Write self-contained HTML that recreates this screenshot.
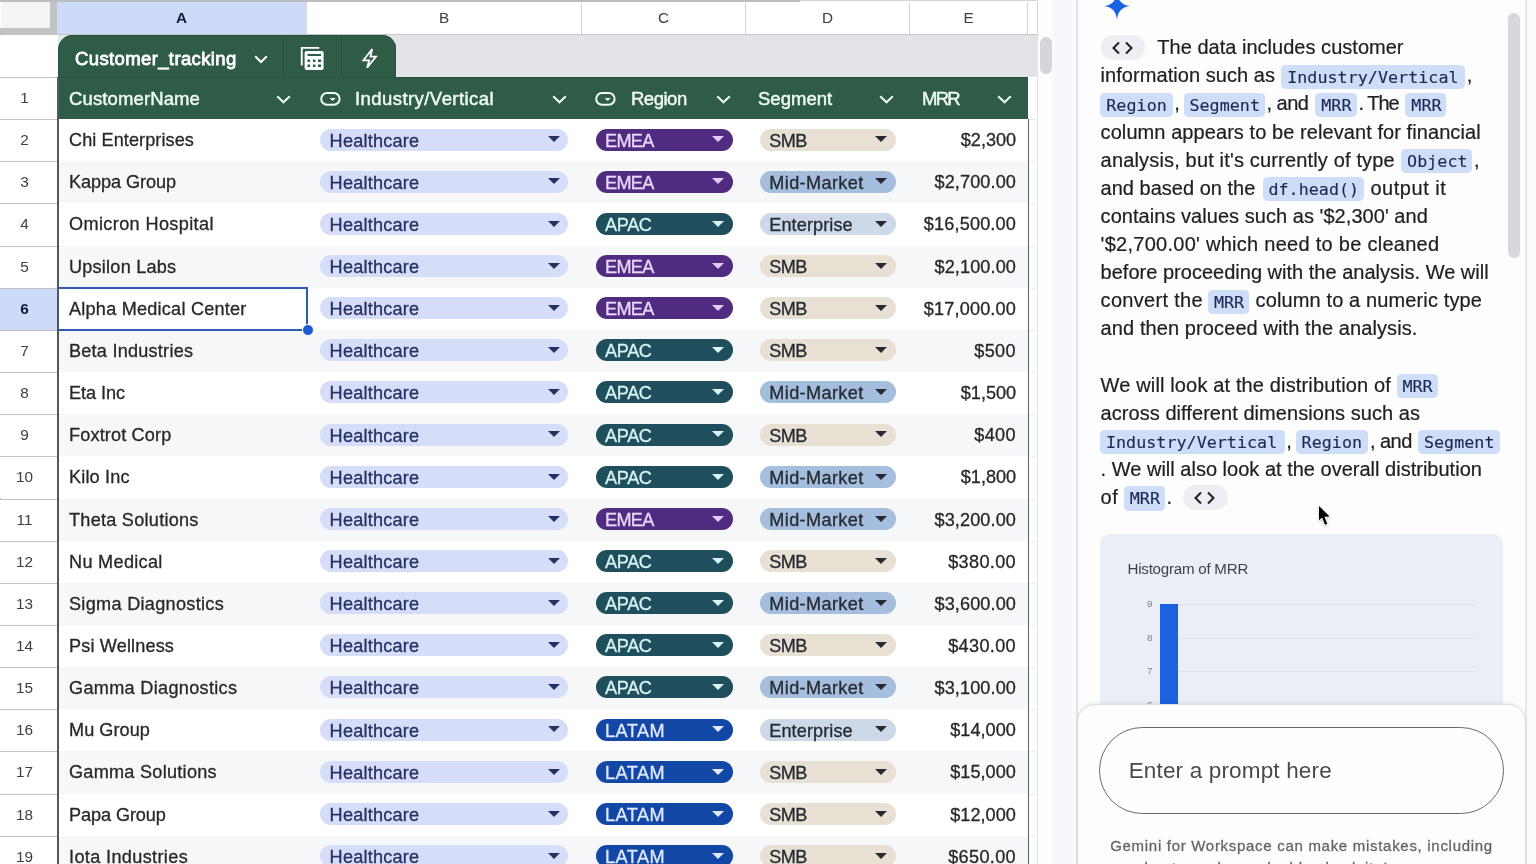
<!DOCTYPE html>
<html lang="en"><head><meta charset="utf-8"><title>Customer tracking</title>
<style>
*{box-sizing:border-box;margin:0;padding:0}
html,body{width:1536px;height:864px;overflow:hidden;background:#fff}
body{position:relative;font-family:"Liberation Sans",sans-serif;color:#1f1f1f}
#sheet{position:absolute;left:0;top:0;width:1054px;height:864px;background:#fff;overflow:hidden}
/* column headers */
#topline{position:absolute;left:0;top:0;width:800px;height:2px;background:#bcbdbf}
#topline2{position:absolute;left:800px;top:0;width:254px;height:1px;background:#d4d5d7}
#leftedge{position:absolute;left:0;top:29px;width:1px;height:840px;background:#b9bbbe}
.fl{position:absolute;left:1029px;width:9px;height:1px;background:#eceef0}
.ch{position:absolute;top:2px;height:32px;background:#fff;border-right:1px solid #d5d6d8;font-size:15.3px;color:#3c4043;text-align:center;line-height:31px}
.ch.sel{background:#ccdbf7;color:#0b1d3f;font-weight:bold}
#chline{position:absolute;left:57px;top:34px;width:997px;height:1px;background:#c4c6c8}
#corner{position:absolute;left:0;top:0;width:57px;height:35px;background:#f3f4f6;box-shadow:inset 0 0 0 1.5px #fcfcfc}
#corner i{position:absolute;display:block;background:#c2c3c5}
/* band row */
#band{position:absolute;left:58px;top:35px;width:980px;height:42px;background:#e2e4e7}
#tab{position:absolute;left:58px;top:35px;width:338px;height:43px;background:#2f5c46;border-radius:15px 14px 0 0;color:#fff;box-shadow:inset 0 0 0 1px #2a523f}
#tab .t{position:absolute;left:17px;top:0;line-height:47.9px;font-size:18.5px;color:#fff;-webkit-text-stroke:0.8px #fff}
#tab .dv{position:absolute;top:2px;width:1px;height:40px;background:#28503d}
/* row header column */
.rh{position:absolute;left:0;width:57px;height:42.15px;border-top:1px solid #bfc1c3;font-size:15.3px;color:#3c4043;text-align:center;line-height:40px;padding-right:8px;background:#fff}
.rh.sel{background:#ccdbf7;color:#0b1d3f;font-weight:bold}
/* green header row */
#hdr{position:absolute;left:58px;top:77px;width:970px;height:42.2px;background:#2f5c46;box-shadow:inset 0 1px 0 #2b5441;color:#f0fff6;font-size:18.5px}
#hdr .h{position:absolute;top:0;line-height:43.1px;white-space:nowrap;color:#eefcf4;-webkit-text-stroke:0.45px #eefcf4}
#hdr svg{position:absolute}
/* data rows */
.row{position:absolute;left:58px;width:970px;height:42.15px;font-size:18.1px;-webkit-text-stroke:0.3px;color:#26282b;white-space:nowrap}
.row.even{background:#fff}
.row.odd{background:#f5f7f9}
.nm{position:absolute;left:11px;top:0;line-height:43.6px}
.mrr{position:absolute;right:12px;top:0;line-height:43.6px;text-align:right}
.chip{position:absolute;top:9.4px;height:22px;border-radius:11px;line-height:22px}
.chip .ct{position:absolute;left:9.3px;top:0;line-height:24.6px}
.tri{position:absolute;top:7.8px;width:0;height:0;border-left:6px solid transparent;border-right:6px solid transparent;border-top:6.5px solid #333}
.ind{left:262.3px;width:248px;background:#d5ddf8;color:#273063}
.ind .tri{right:8.8px;border-top-color:#273063}
.reg{left:537.8px;width:137.5px;color:#e6dcff}
.reg .tri{right:9.2px;border-top-color:#e6dcff}
.emea{background:#502c80;color:#e9d7ff}.emea .tri{border-top-color:#e2c9ff}
.apac{background:#1f4f5c;color:#d9f4f6}.apac .tri{border-top-color:#d9f4f6}
.latam{background:#1347a6;color:#dfe9ff}.latam .tri{border-top-color:#dfe9ff}
.seg{left:702px;width:136px;color:#262b33}
.seg .tri{right:9px;border-top-color:#262b33}
.smb{background:#e7e0d3}
.midmarket{background:#a5bedd}
.enterprise{background:#cdd8e9}
#selbox{position:absolute;left:57px;top:287px;width:251px;height:44px;border:2.5px solid #2d5bb4;pointer-events:none}
#selhandle{position:absolute;left:302px;top:324.2px;width:12px;height:12px;border-radius:50%;background:#1d5bd0;border:1px solid #fff}
#tblleft{position:absolute;left:57px;top:77px;width:2px;height:800px;background:#4d5a57}
#tblright{position:absolute;left:1027.5px;top:119px;width:1.5px;height:800px;background:#5a5f63}
/* stub column F and scrollbar */
#colF{position:absolute;left:1029px;top:119px;width:9px;height:760px;background:#fff}
#vscroll{position:absolute;left:1038px;top:0;width:16px;height:864px;background:linear-gradient(90deg,#fefefe 0,#fefefe 11px,#f8fafc 16px)}
#colFline{position:absolute;left:1037px;top:77px;width:2px;height:800px;background:#dedfe1}
#vthumb{position:absolute;left:1040px;top:37px;width:12px;height:37px;border-radius:6px;background:#d4d6d9}
/* gap */
#gap{position:absolute;left:1054px;top:0;width:22px;height:864px;background:linear-gradient(90deg,#f6f8fc 0,#f6f8fc 18px,#fcfcfd 21px)}
/* panel */
#panel{position:absolute;left:1076px;top:-20px;width:451px;height:900px;background:#fdfdfe;border-left:2px solid #e3e4e7;border-right:2px solid #e7e8eb;overflow:hidden}
#rightedge{position:absolute;left:1527px;top:0;width:9px;height:864px;background:#fbfbfd}
#msg{position:absolute;left:0;top:0;width:1536px;height:520px;font-size:20px;color:#1f1f1f;white-space:nowrap}
#msg .ln{position:absolute;left:0;width:1536px;height:28.11px;line-height:28.11px}
#msg .tx{position:absolute;top:0;line-height:28.11px;letter-spacing:0.04px;-webkit-text-stroke:0.22px #1f1f1f}
code{position:absolute;top:3.4px;height:24.3px;line-height:24.8px;font-family:"DejaVu Sans Mono","Liberation Mono",monospace;font-size:16.7px;background:#cedef9;color:#1b2a55;-webkit-text-stroke:0.15px #1b2a55;border-radius:4.5px;padding-left:5.9px;white-space:nowrap;overflow:hidden}
.cb{position:absolute;top:2px;height:24.8px;border-radius:12.4px;background:#eceef4}
.cb svg{position:absolute;left:50%;margin-left:-11.9px;top:4.6px}
#pscroll{position:absolute;left:1508px;top:13px;width:11.5px;height:245px;border-radius:6px;background:#d6d8dc}
#chart{position:absolute;left:1100px;top:534px;width:403px;height:200px;border-radius:11px;background:#ebeef6}
#chart .ttl{position:absolute;left:27.5px;top:24.5px;font-size:15.1px;color:#3f4347;line-height:20px;white-space:nowrap}
#chart .gl{position:absolute;left:60px;width:315px;height:1px;background:#dcdfe6}
#chart .yl{position:absolute;left:36.5px;width:16px;text-align:right;font-size:9.8px;color:#7d8187;line-height:12px}
#chart .bar{position:absolute;left:59.8px;top:70.3px;width:18px;height:140px;background:#1b62e0}
#inputcard{position:absolute;left:1076.5px;top:704.3px;width:449.5px;height:200px;background:#fdfdfe;border:1.3px solid #dddee2;border-radius:18px 18px 0 0;box-shadow:0 -1px 3px rgba(60,64,67,.10)}
#prompt{position:absolute;left:1098.7px;top:727px;width:405px;height:86.5px;border:1.6px solid #686b6f;border-radius:43.25px;background:#fefefe}
#prompt span{position:absolute;left:29px;top:0;line-height:86px;font-size:22.5px;color:#474a4d;white-space:nowrap}
#foot{position:absolute;left:1110.2px;top:834.7px;width:400px;font-size:15px;line-height:22.5px;color:#62666b;-webkit-text-stroke:0.3px #62666b;white-space:nowrap}
#cursor{position:absolute;left:1316px;top:503px;filter:drop-shadow(0 1px 1px rgba(0,0,0,.25))}

/* render text with greyscale antialiasing */
#sheet,#msg,#chart,#prompt,#foot{opacity:.999}

</style></head>
<body>
<div id="sheet">
<div id="corner"><i style="left:50px;top:0;width:7px;height:35px"></i><i style="left:0;top:28px;width:57px;height:7px"></i></div>
<div class="ch sel" style="left:57px;width:250px">A</div>
<div class="ch" style="left:307px;width:275px">B</div>
<div class="ch" style="left:582px;width:164px">C</div>
<div class="ch" style="left:746px;width:164px">D</div>
<div class="ch" style="left:910px;width:118px">E</div>
<div class="ch" style="left:1028px;width:10px"></div>
<div id="topline"></div><div id="topline2"></div><div id="leftedge"></div>
<div id="chline"></div>
<div class="rh" style="top:35px;border-top:none;height:42px"></div>
<div id="band"></div>
<div id="tab"><span class="t" style="letter-spacing:0.377px">Customer_tracking</span>
<svg style="position:absolute;left:195.5px;top:19.7px" width="14" height="9" viewBox="0 0 14 9"><path d="M1.2 1.2 L7 7 L12.8 1.2" fill="none" stroke="#fff" stroke-width="2"/></svg>
<i class="dv" style="left:225px"></i><i class="dv" style="left:283px"></i>
<svg style="position:absolute;left:241px;top:10px" width="27" height="27" viewBox="0 0 27 27"><path d="M2.75 20.6 V2.9 H20.300" fill="none" stroke="#fff" stroke-width="1.9"/><rect x="5.6" y="5.9" width="19" height="19" rx="1.800" fill="#fff"/><path d="M8.500 9.100 h13.600 v1.800 h-13.600 Z M8.500 14.500 h2.500 v2.500 h-2.500 Z M13.900 14.500 h2.500 v2.500 h-2.500 Z M18.900 14.500 h3.200 v2.500 h-3.200 Z M8.500 19.500 h2.500 v2.500 h-2.500 Z M13.900 19.500 h2.500 v2.500 h-2.500 Z M18.900 19.500 h3.200 v2.500 h-3.200 Z" fill="#2f5c46"/></svg>
<svg style="position:absolute;left:301px;top:10px" width="22" height="27" viewBox="0 0 22 27"><path d="M13.2 4 L4.4 15.300 H10.200 L8.100 22.800 L17 11.600 H11.400 Z" fill="none" stroke="#fff" stroke-width="1.800" stroke-linejoin="miter"/></svg>
</div>
<div class="rh" style="top:77px">1</div>
<div id="hdr">
<span class="h" style="left:11px;letter-spacing:0.123px">CustomerName</span>
<svg style="left:218px;top:18px" width="15" height="9" viewBox="0 0 15 9"><path d="M1.2 1.2 L7.500 7.300 L13.800 1.200" fill="none" stroke="#effdf5" stroke-width="2"/></svg>
<svg style="left:261px;top:13.500px" width="23" height="16" viewBox="0 0 23 16"><rect x="2.2" y="2.1" width="18.4" height="11.6" rx="5.8" fill="none" stroke="#effdf5" stroke-width="2"/><path d="M10.6 7.1 H16.700 L13.650 10 Z" fill="#effdf5"/></svg>
<span class="h" style="left:297px;letter-spacing:0.436px">Industry/Vertical</span>
<svg style="left:494px;top:18px" width="15" height="9" viewBox="0 0 15 9"><path d="M1.2 1.2 L7.500 7.300 L13.800 1.200" fill="none" stroke="#effdf5" stroke-width="2"/></svg>
<svg style="left:536px;top:13.500px" width="23" height="16" viewBox="0 0 23 16"><rect x="2.2" y="2.1" width="18.4" height="11.6" rx="5.8" fill="none" stroke="#effdf5" stroke-width="2"/><path d="M10.6 7.1 H16.700 L13.650 10 Z" fill="#effdf5"/></svg>
<span class="h" style="left:573px;letter-spacing:-0.488px">Region</span>
<svg style="left:658px;top:18px" width="15" height="9" viewBox="0 0 15 9"><path d="M1.2 1.2 L7.500 7.300 L13.800 1.200" fill="none" stroke="#effdf5" stroke-width="2"/></svg>
<span class="h" style="left:700px;letter-spacing:0.026px">Segment</span>
<svg style="left:821px;top:18px" width="15" height="9" viewBox="0 0 15 9"><path d="M1.2 1.2 L7.500 7.300 L13.800 1.200" fill="none" stroke="#effdf5" stroke-width="2"/></svg>
<span class="h" style="left:864px;letter-spacing:-1.770px">MRR</span>
<svg style="left:939px;top:18px" width="15" height="9" viewBox="0 0 15 9"><path d="M1.2 1.2 L7.500 7.300 L13.800 1.200" fill="none" stroke="#effdf5" stroke-width="2"/></svg>
</div>
<div id="colF"></div>
<div id="colFline"></div><div id="vscroll"></div><div id="vthumb"></div>
<div class="rh" style="top:119.15px">2</div>
<div class="row even" style="top:119.15px"><span class="nm" style="letter-spacing:0.085px">Chi Enterprises</span><span class="chip ind"><span class="ct" style="letter-spacing:0.232px">Healthcare</span><i class="tri"></i></span><span class="chip reg emea"><span class="ct" style="letter-spacing:-0.694px">EMEA</span><i class="tri"></i></span><span class="chip seg smb"><span class="ct" style="letter-spacing:-0.609px">SMB</span><i class="tri"></i></span><span class="mrr" style="letter-spacing:-0.029px">$2,300</span></div>
<div class="rh" style="top:161.30px">3</div>
<div class="row odd" style="top:161.30px"><span class="nm" style="letter-spacing:-0.054px">Kappa Group</span><span class="chip ind"><span class="ct" style="letter-spacing:0.232px">Healthcare</span><i class="tri"></i></span><span class="chip reg emea"><span class="ct" style="letter-spacing:-0.694px">EMEA</span><i class="tri"></i></span><span class="chip seg midmarket"><span class="ct" style="letter-spacing:0.380px">Mid-Market</span><i class="tri"></i></span><span class="mrr" style="letter-spacing:0.113px">$2,700.00</span></div>
<div class="rh" style="top:203.45px">4</div>
<div class="row even" style="top:203.45px"><span class="nm" style="letter-spacing:0.382px">Omicron Hospital</span><span class="chip ind"><span class="ct" style="letter-spacing:0.232px">Healthcare</span><i class="tri"></i></span><span class="chip reg apac"><span class="ct" style="letter-spacing:-0.379px">APAC</span><i class="tri"></i></span><span class="chip seg enterprise"><span class="ct" style="letter-spacing:0.092px">Enterprise</span><i class="tri"></i></span><span class="mrr" style="letter-spacing:0.160px">$16,500.00</span></div>
<div class="rh" style="top:245.60px">5</div>
<div class="row odd" style="top:245.60px"><span class="nm" style="letter-spacing:0.226px">Upsilon Labs</span><span class="chip ind"><span class="ct" style="letter-spacing:0.232px">Healthcare</span><i class="tri"></i></span><span class="chip reg emea"><span class="ct" style="letter-spacing:-0.694px">EMEA</span><i class="tri"></i></span><span class="chip seg smb"><span class="ct" style="letter-spacing:-0.609px">SMB</span><i class="tri"></i></span><span class="mrr" style="letter-spacing:0.113px">$2,100.00</span></div>
<div class="rh sel" style="top:287.75px">6</div>
<div class="row even" style="top:287.75px"><span class="nm" style="letter-spacing:0.232px">Alpha Medical Center</span><span class="chip ind"><span class="ct" style="letter-spacing:0.232px">Healthcare</span><i class="tri"></i></span><span class="chip reg emea"><span class="ct" style="letter-spacing:-0.694px">EMEA</span><i class="tri"></i></span><span class="chip seg smb"><span class="ct" style="letter-spacing:-0.609px">SMB</span><i class="tri"></i></span><span class="mrr" style="letter-spacing:0.160px">$17,000.00</span></div>
<div class="rh" style="top:329.90px">7</div>
<div class="row odd" style="top:329.90px"><span class="nm" style="letter-spacing:0.235px">Beta Industries</span><span class="chip ind"><span class="ct" style="letter-spacing:0.232px">Healthcare</span><i class="tri"></i></span><span class="chip reg apac"><span class="ct" style="letter-spacing:-0.379px">APAC</span><i class="tri"></i></span><span class="chip seg smb"><span class="ct" style="letter-spacing:-0.609px">SMB</span><i class="tri"></i></span><span class="mrr" style="letter-spacing:0.378px">$500</span></div>
<div class="rh" style="top:372.05px">8</div>
<div class="row even" style="top:372.05px"><span class="nm" style="letter-spacing:-0.055px">Eta Inc</span><span class="chip ind"><span class="ct" style="letter-spacing:0.232px">Healthcare</span><i class="tri"></i></span><span class="chip reg apac"><span class="ct" style="letter-spacing:-0.379px">APAC</span><i class="tri"></i></span><span class="chip seg midmarket"><span class="ct" style="letter-spacing:0.380px">Mid-Market</span><i class="tri"></i></span><span class="mrr" style="letter-spacing:-0.029px">$1,500</span></div>
<div class="rh" style="top:414.20px">9</div>
<div class="row odd" style="top:414.20px"><span class="nm" style="letter-spacing:0.158px">Foxtrot Corp</span><span class="chip ind"><span class="ct" style="letter-spacing:0.232px">Healthcare</span><i class="tri"></i></span><span class="chip reg apac"><span class="ct" style="letter-spacing:-0.379px">APAC</span><i class="tri"></i></span><span class="chip seg smb"><span class="ct" style="letter-spacing:-0.609px">SMB</span><i class="tri"></i></span><span class="mrr" style="letter-spacing:0.378px">$400</span></div>
<div class="rh" style="top:456.35px">10</div>
<div class="row even" style="top:456.35px"><span class="nm" style="letter-spacing:0.165px">Kilo Inc</span><span class="chip ind"><span class="ct" style="letter-spacing:0.232px">Healthcare</span><i class="tri"></i></span><span class="chip reg apac"><span class="ct" style="letter-spacing:-0.379px">APAC</span><i class="tri"></i></span><span class="chip seg midmarket"><span class="ct" style="letter-spacing:0.380px">Mid-Market</span><i class="tri"></i></span><span class="mrr" style="letter-spacing:-0.029px">$1,800</span></div>
<div class="rh" style="top:498.50px">11</div>
<div class="row odd" style="top:498.50px"><span class="nm" style="letter-spacing:0.262px">Theta Solutions</span><span class="chip ind"><span class="ct" style="letter-spacing:0.232px">Healthcare</span><i class="tri"></i></span><span class="chip reg emea"><span class="ct" style="letter-spacing:-0.694px">EMEA</span><i class="tri"></i></span><span class="chip seg midmarket"><span class="ct" style="letter-spacing:0.380px">Mid-Market</span><i class="tri"></i></span><span class="mrr" style="letter-spacing:0.113px">$3,200.00</span></div>
<div class="rh" style="top:540.65px">12</div>
<div class="row even" style="top:540.65px"><span class="nm" style="letter-spacing:0.320px">Nu Medical</span><span class="chip ind"><span class="ct" style="letter-spacing:0.232px">Healthcare</span><i class="tri"></i></span><span class="chip reg apac"><span class="ct" style="letter-spacing:-0.379px">APAC</span><i class="tri"></i></span><span class="chip seg smb"><span class="ct" style="letter-spacing:-0.609px">SMB</span><i class="tri"></i></span><span class="mrr" style="letter-spacing:0.349px">$380.00</span></div>
<div class="rh" style="top:582.80px">13</div>
<div class="row odd" style="top:582.80px"><span class="nm" style="letter-spacing:0.304px">Sigma Diagnostics</span><span class="chip ind"><span class="ct" style="letter-spacing:0.232px">Healthcare</span><i class="tri"></i></span><span class="chip reg apac"><span class="ct" style="letter-spacing:-0.379px">APAC</span><i class="tri"></i></span><span class="chip seg midmarket"><span class="ct" style="letter-spacing:0.380px">Mid-Market</span><i class="tri"></i></span><span class="mrr" style="letter-spacing:0.113px">$3,600.00</span></div>
<div class="rh" style="top:624.95px">14</div>
<div class="row even" style="top:624.95px"><span class="nm" style="letter-spacing:0.150px">Psi Wellness</span><span class="chip ind"><span class="ct" style="letter-spacing:0.232px">Healthcare</span><i class="tri"></i></span><span class="chip reg apac"><span class="ct" style="letter-spacing:-0.379px">APAC</span><i class="tri"></i></span><span class="chip seg smb"><span class="ct" style="letter-spacing:-0.609px">SMB</span><i class="tri"></i></span><span class="mrr" style="letter-spacing:0.349px">$430.00</span></div>
<div class="rh" style="top:667.10px">15</div>
<div class="row odd" style="top:667.10px"><span class="nm" style="letter-spacing:0.318px">Gamma Diagnostics</span><span class="chip ind"><span class="ct" style="letter-spacing:0.232px">Healthcare</span><i class="tri"></i></span><span class="chip reg apac"><span class="ct" style="letter-spacing:-0.379px">APAC</span><i class="tri"></i></span><span class="chip seg midmarket"><span class="ct" style="letter-spacing:0.380px">Mid-Market</span><i class="tri"></i></span><span class="mrr" style="letter-spacing:0.113px">$3,100.00</span></div>
<div class="rh" style="top:709.25px">16</div>
<div class="row even" style="top:709.25px"><span class="nm" style="letter-spacing:0.064px">Mu Group</span><span class="chip ind"><span class="ct" style="letter-spacing:0.232px">Healthcare</span><i class="tri"></i></span><span class="chip reg latam"><span class="ct" style="letter-spacing:0.440px">LATAM</span><i class="tri"></i></span><span class="chip seg enterprise"><span class="ct" style="letter-spacing:0.092px">Enterprise</span><i class="tri"></i></span><span class="mrr" style="letter-spacing:0.066px">$14,000</span></div>
<div class="rh" style="top:751.40px">17</div>
<div class="row odd" style="top:751.40px"><span class="nm" style="letter-spacing:0.271px">Gamma Solutions</span><span class="chip ind"><span class="ct" style="letter-spacing:0.232px">Healthcare</span><i class="tri"></i></span><span class="chip reg latam"><span class="ct" style="letter-spacing:0.440px">LATAM</span><i class="tri"></i></span><span class="chip seg smb"><span class="ct" style="letter-spacing:-0.609px">SMB</span><i class="tri"></i></span><span class="mrr" style="letter-spacing:0.066px">$15,000</span></div>
<div class="rh" style="top:793.55px">18</div>
<div class="row even" style="top:793.55px"><span class="nm" style="letter-spacing:-0.075px">Papa Group</span><span class="chip ind"><span class="ct" style="letter-spacing:0.232px">Healthcare</span><i class="tri"></i></span><span class="chip reg latam"><span class="ct" style="letter-spacing:0.440px">LATAM</span><i class="tri"></i></span><span class="chip seg smb"><span class="ct" style="letter-spacing:-0.609px">SMB</span><i class="tri"></i></span><span class="mrr" style="letter-spacing:0.066px">$12,000</span></div>
<div class="rh" style="top:835.70px">19</div>
<div class="row odd" style="top:835.70px"><span class="nm" style="letter-spacing:0.360px">Iota Industries</span><span class="chip ind"><span class="ct" style="letter-spacing:0.232px">Healthcare</span><i class="tri"></i></span><span class="chip reg latam"><span class="ct" style="letter-spacing:0.440px">LATAM</span><i class="tri"></i></span><span class="chip seg smb"><span class="ct" style="letter-spacing:-0.609px">SMB</span><i class="tri"></i></span><span class="mrr" style="letter-spacing:0.349px">$650.00</span></div>
<div class="fl" style="top:119.15px"></div><div class="fl" style="top:161.30px"></div><div class="fl" style="top:203.45px"></div><div class="fl" style="top:245.60px"></div><div class="fl" style="top:287.75px"></div><div class="fl" style="top:329.90px"></div><div class="fl" style="top:372.05px"></div><div class="fl" style="top:414.20px"></div><div class="fl" style="top:456.35px"></div><div class="fl" style="top:498.50px"></div><div class="fl" style="top:540.65px"></div><div class="fl" style="top:582.80px"></div><div class="fl" style="top:624.95px"></div><div class="fl" style="top:667.10px"></div><div class="fl" style="top:709.25px"></div><div class="fl" style="top:751.40px"></div><div class="fl" style="top:793.55px"></div><div class="fl" style="top:835.70px"></div><div class="fl" style="top:877.85px"></div>
<div id="selbox"></div><div id="selhandle"></div>
<div id="tblleft"></div><div id="tblright"></div>
</div>
<div id="gap"></div>
<div id="panel"></div>
<div id="rightedge"></div>
<svg id="spark" style="position:absolute;left:1104.4px;top:-8px" width="26" height="28" viewBox="0 0 26 28"><path d="M13 0 C13.500 8.200 18.400 13.500 26 14 C18.400 14.500 13.500 19.800 13 28 C12.500 19.800 7.600 14.500 0 14 C7.600 13.500 12.500 8.200 13 0 Z" fill="#1a63e0"/></svg>
<div id="msg">
<div class="ln" style="top:33.25px"><span class="cb" style="left:1101.2px;width:43.9px"><svg width="23" height="16" viewBox="0 0 23 16"><path d="M8 2.5 L2.5 8 L8 13.5 M15 2.5 L20.5 8 L15 13.5" fill="none" stroke="#1f1f1f" stroke-width="2"/></svg></span><span class="tx" style="left:1157.3px;letter-spacing:0.021px">The data includes customer</span></div>
<div class="ln" style="top:61.36px"><span class="tx" style="left:1100.6px;letter-spacing:0.049px">information such as</span><code style="left:1281.3px;width:184.0px;letter-spacing:0.035px">Industry/Vertical</code><span class="tx" style="left:1466.8px">,</span></div>
<div class="ln" style="top:89.47px"><code style="left:1100.4px;width:72.5px;letter-spacing:0.040px">Region</code><span class="tx" style="left:1174.3px">,</span><code style="left:1183.5px;width:81.6px;letter-spacing:0.039px">Segment</code><span class="tx" style="left:1266.6px;letter-spacing:-0.546px">, and</span><code style="left:1315.3px;width:41.5px;letter-spacing:0.050px">MRR</code><span class="tx" style="left:1358.5px;letter-spacing:-1.030px">. The</span><code style="left:1405.4px;width:41.1px;letter-spacing:0.050px">MRR</code></div>
<div class="ln" style="top:117.58px"><span class="tx" style="left:1100.6px;letter-spacing:0.074px">column appears to be relevant for financial</span></div>
<div class="ln" style="top:145.69px"><span class="tx" style="left:1100.6px;letter-spacing:0.163px">analysis, but it&#x27;s currently of type</span><code style="left:1401.2px;width:71.3px;letter-spacing:0.040px">Object</code><span class="tx" style="left:1474.0px">,</span></div>
<div class="ln" style="top:173.80px"><span class="tx" style="left:1100.6px;letter-spacing:0.014px">and based on the</span><code style="left:1262.5px;width:101.4px;letter-spacing:0.037px">df.head()</code><span class="tx" style="left:1370.4px;letter-spacing:0.541px">output it</span></div>
<div class="ln" style="top:201.91px"><span class="tx" style="left:1100.6px;letter-spacing:0.045px">contains values such as &#x27;$2,300&#x27; and</span></div>
<div class="ln" style="top:230.02px"><span class="tx" style="left:1100.6px;letter-spacing:0.271px">&#x27;$2,700.00&#x27; which need to be cleaned</span></div>
<div class="ln" style="top:258.13px"><span class="tx" style="left:1100.6px;letter-spacing:0.011px">before proceeding with the analysis. We will</span></div>
<div class="ln" style="top:286.24px"><span class="tx" style="left:1100.6px;letter-spacing:0.305px">convert the</span><code style="left:1208.0px;width:41.0px;letter-spacing:0.050px">MRR</code><span class="tx" style="left:1255.6px;letter-spacing:0.124px">column to a numeric type</span></div>
<div class="ln" style="top:314.35px"><span class="tx" style="left:1100.6px;letter-spacing:0.096px">and then proceed with the analysis.</span></div>
<div class="ln" style="top:370.57px"><span class="tx" style="left:1100.6px;letter-spacing:0.143px">We will look at the distribution of</span><code style="left:1396.5px;width:41.5px;letter-spacing:0.050px">MRR</code></div>
<div class="ln" style="top:398.68px"><span class="tx" style="left:1100.6px;letter-spacing:0.054px">across different dimensions such as</span></div>
<div class="ln" style="top:426.79px"><code style="left:1100.0px;width:184.8px;letter-spacing:0.035px">Industry/Vertical</code><span class="tx" style="left:1286.3px">,</span><code style="left:1295.7px;width:72.7px;letter-spacing:0.040px">Region</code><span class="tx" style="left:1370.0px;letter-spacing:-0.546px">, and</span><code style="left:1418.0px;width:82.2px;letter-spacing:0.039px">Segment</code></div>
<div class="ln" style="top:454.90px"><span class="tx" style="left:1100.6px;letter-spacing:0.008px">. We will also look at the overall distribution</span></div>
<div class="ln" style="top:483.01px"><span class="tx" style="left:1100.6px;letter-spacing:0.513px">of</span><code style="left:1123.8px;width:41.2px;letter-spacing:0.050px">MRR</code><span class="tx" style="left:1166.5px">.</span><span class="cb" style="left:1183.0px;width:44.5px"><svg width="23" height="16" viewBox="0 0 23 16"><path d="M8 2.5 L2.5 8 L8 13.5 M15 2.5 L20.5 8 L15 13.5" fill="none" stroke="#1f1f1f" stroke-width="2"/></svg></span></div>
</div>
<div id="pscroll"></div>
<div id="chart"><div class="ttl" style="letter-spacing:-0.223px">Histogram of MRR</div>
<div class="gl" style="top:70px"></div><div class="gl" style="top:103.500px"></div><div class="gl" style="top:137px"></div><div class="gl" style="top:170.500px"></div>
<div class="yl" style="top:64px">9</div><div class="yl" style="top:97.500px">8</div><div class="yl" style="top:131px">7</div><div class="yl" style="top:164.500px">6</div>
<div class="bar"></div></div>
<div id="inputcard"></div>
<div id="prompt"><span style="letter-spacing:0.161px">Enter a prompt here</span></div>
<div id="foot"><span style="letter-spacing:0.704px">Gemini for Workspace can make mistakes, including</span><br><span style="margin-left:25.3px;letter-spacing:0.7px">about people, so double-check it. Learn more</span></div>
<svg id="cursor" width="18" height="26" viewBox="0 0 18 26"><path d="M3 3 L3 17.2 L6.100 14.400 L9 21.700 L11.300 20.800 L8.400 13.800 L13.600 13.500 Z" fill="#000" stroke="#fff" stroke-width="1.300" stroke-linejoin="round" paint-order="stroke"/></svg>
</body></html>
